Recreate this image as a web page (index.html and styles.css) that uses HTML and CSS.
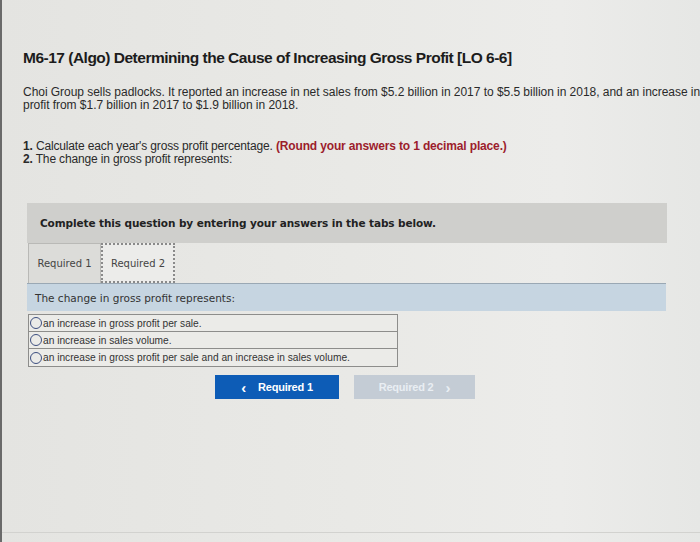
FILE: index.html
```html
<!DOCTYPE html>
<html>
<head>
<meta charset="utf-8">
<link rel="stylesheet" href="styles.css">
</head>
<body>
<div class="page">
  <h1 class="title">M6-17 (Algo) Determining the Cause of Increasing Gross Profit [LO 6-6]</h1>
  <p class="intro">Choi Group sells padlocks. It reported an increase in net sales from $5.2 billion in 2017 to $5.5 billion in 2018, and an increase in profit from $1.7 billion in 2017 to $1.9 billion in 2018.</p>
  <ol class="reqs">
    <li><b>1.</b> Calculate each year's gross profit percentage. <span class="red">(Round your answers to 1 decimal place.)</span></li>
    <li><b>2.</b> The change in gross profit represents:</li>
  </ol>
  <div class="box">
    <div class="complete">Complete this question by entering your answers in the tabs below.</div>
  </div>
  <div class="tabs">
    <div class="tab">Required 1</div>
    <div class="tab active">Required 2</div>
  </div>
  <div class="question">The change in gross profit represents:</div>
  <div class="options">
    <div class="opt"><span class="radio"></span>an increase in gross profit per sale.</div>
    <div class="opt"><span class="radio"></span>an increase in sales volume.</div>
    <div class="opt"><span class="radio"></span>an increase in gross profit per sale and an increase in sales volume.</div>
  </div>
  <div class="nav">
    <div class="btn prev"><span class="chev">&lsaquo;</span>Required 1</div>
    <div class="btn next">Required 2<span class="chev">&rsaquo;</span></div>
  </div>
</div>
</body>
</html>
```
FILE: styles.css
```css
html, body { margin: 0; padding: 0; }
body {
  width: 700px;
  height: 542px;
  overflow: hidden;
  background: linear-gradient(90deg, #e4e4e1 0%, #e9e9e6 50%, #ececea 80%, #e6e7e5 100%);
  font-family: "Liberation Sans", Arial, sans-serif;
  color: #222;
  border-left: 2px solid #6a6a6a;
  box-sizing: border-box;
}
.page {
  padding: 48px 0 0 21px;
  height: 533px;
  box-sizing: border-box;
  border-bottom: 1px solid #d2d2cf;
}
.title {
  margin: 0;
  font-size: 15.5px;
  font-weight: bold;
  line-height: 20px;
  color: #1c1c1c;
  letter-spacing: -0.5px;
}
.intro {
  margin: 18px 0 0 0;
  font-size: 12px;
  line-height: 13px;
  width: 678px;
  letter-spacing: -0.04px;
  color: #2a2a2a;
}
.reqs {
  list-style: none;
  margin: 28px 0 0 0;
  padding: 0;
  font-size: 12px;
  line-height: 13px;
  letter-spacing: -0.15px;
  color: #2a2a2a;
}
.red { color: #9c1d2c; font-weight: bold; }
.box {
  margin: 37px 0 0 4px;
  width: 640px;
  height: 40px;
  background: #cfcfcc;
  display: flex;
  align-items: center;
  padding-left: 13px;
  box-sizing: border-box;
}
.complete {
  font-family: "DejaVu Sans", Verdana, sans-serif;
  font-weight: bold;
  font-size: 10.5px;
  color: #222;
  letter-spacing: -0.1px;
}
.tabs {
  display: flex;
  margin-left: 5px;
  height: 40px;
}
.tab {
  width: 73px;
  box-sizing: border-box;
  display: flex;
  align-items: center;
  justify-content: center;
  font-family: "DejaVu Sans", Verdana, sans-serif;
  font-size: 10px;
  color: #444;
  background: #dcdcd9;
  border: 1px solid #b9b9b6;
  border-bottom: none;
}
.tab.active {
  background: #ececea;
  border: 2px dotted #8a8a8a;
  width: 74px;
}
.question {
  margin-left: 4px;
  width: 639px;
  height: 28px;
  background: #c6d5e1;
  border-top: 1px solid #9aa8b4;
  box-sizing: border-box;
  display: flex;
  align-items: center;
  padding-left: 8px;
  font-family: "DejaVu Sans", Verdana, sans-serif;
  font-size: 10.5px;
  color: #333;
}
.options {
  margin: 3px 0 0 5px;
  width: 368px;
  border: 1px solid #8d8d8b;
  background: #ebebe8;
}
.opt {
  height: 16px;
  display: flex;
  align-items: center;
  font-size: 10.2px;
  color: #333;
  border-bottom: 1px solid #8d8d8b;
}
.opt:last-child { border-bottom: none; height: 17px; }
.radio {
  width: 10px;
  height: 10px;
  border: 1.5px solid #3d4f80;
  border-radius: 50%;
  margin: 0 1px 0 1px;
  flex: none;
}
.nav {
  display: flex;
  gap: 15px;
  margin: 8px 0 0 192px;
}
.btn {
  height: 24px;
  box-sizing: border-box;
  display: flex;
  align-items: center;
  justify-content: center;
  font-size: 11px;
  font-weight: bold;
  letter-spacing: -0.2px;
}
.btn.prev {
  width: 124px;
  background: #0d5cb6;
  color: #fff;
}
.btn.next {
  width: 121px;
  background: #c4ccd5;
  color: #e9eef3;
}
.prev .chev { margin-right: 12px; font-size: 15px; font-weight: bold; line-height: 1; }
.next .chev { margin-left: 12px; font-size: 15px; font-weight: bold; line-height: 1; }
```
